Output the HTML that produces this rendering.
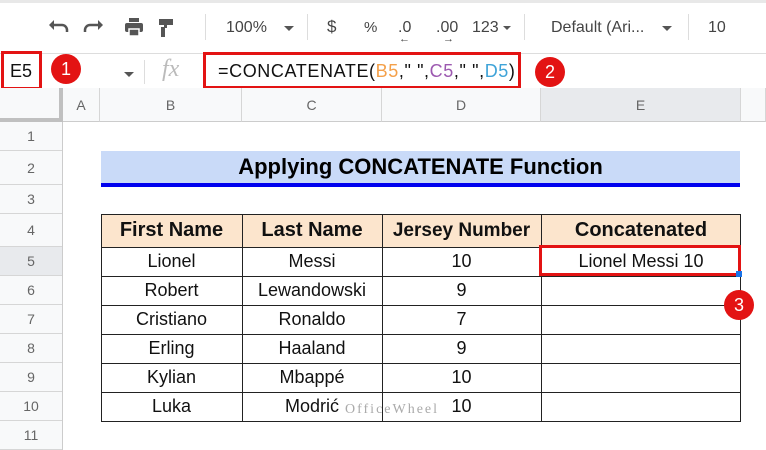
<!DOCTYPE html>
<html><head><style>
*{margin:0;padding:0;box-sizing:border-box}
body{width:766px;height:450px;overflow:hidden;background:#fff;font-family:"Liberation Sans",Arial,sans-serif;position:relative}
.a{position:absolute}
.tb{color:#444;font-size:16px}
.cell{position:absolute;display:flex;align-items:center;justify-content:center;font-size:18px;color:#111;white-space:nowrap}
.rh{position:absolute;left:0;width:62px;border-bottom:1px solid #d6d6d6;background:#f8f9fa;color:#666;font-size:14px;display:flex;align-items:center;justify-content:center}
.ch{position:absolute;top:88px;height:34px;border-right:1px solid #d6d6d6;background:#f8f9fa;color:#666;font-size:14px;display:flex;align-items:center;justify-content:center;border-bottom:1px solid #ccc}
.circ{position:absolute;width:30px;height:30px;border-radius:50%;background:#e31313;color:#fff;font-size:18px;display:flex;align-items:center;justify-content:center}
.hd{font-weight:bold;font-size:20px}
</style></head><body>
<div class="a" style="left:0;top:0;width:766px;height:3px;background:#e8e8e8"></div>
<svg class="a" style="left:46px;top:16px" width="130" height="24" viewBox="0 0 130 24">
<path d="M6 9 h10 a5 5 0 0 1 5 5 v2" fill="none" stroke="#555" stroke-width="2.5"/><path d="M3 9 l5-5 v10z" fill="#555"/>
<path d="M54 9 h-10 a5 5 0 0 0 -5 5 v2" fill="none" stroke="#555" stroke-width="2.5"/><path d="M57 9 l-5-5 v10z" fill="#555"/>
<rect x="83" y="2" width="10" height="4" fill="#555"/><rect x="79" y="7" width="18" height="9" rx="2" fill="#555"/><rect x="83" y="13" width="10" height="7" fill="#555" stroke="#fff" stroke-width="1.5"/>
<rect x="113" y="3" width="14" height="6" fill="#555"/><rect x="118" y="9" width="3" height="3" fill="#555"/><rect x="115" y="11" width="4" height="10" fill="#555"/>
</svg>
<div class="a" style="left:205px;top:14px;width:1px;height:26px;background:#ddd"></div>
<div class="a tb" style="left:226px;top:19px">100%</div><div class="a" style="left:284px;top:26px;border:5px solid transparent;border-top-color:#555"></div>
<div class="a" style="left:307px;top:14px;width:1px;height:26px;background:#ddd"></div>
<div class="a tb" style="left:327px;top:17px;font-size:17px">$</div>
<div class="a tb" style="left:364px;top:19px;font-size:15px">%</div>
<div class="a tb" style="left:398px;top:19px">.0</div><div class="a" style="left:399px;top:33px;font-size:11px;color:#444">←</div>
<div class="a tb" style="left:436px;top:19px">.00</div><div class="a" style="left:443px;top:33px;font-size:11px;color:#444">→</div>
<div class="a tb" style="left:472px;top:19px">123</div><div class="a" style="left:503px;top:26px;border:4px solid transparent;border-top-color:#555"></div>
<div class="a" style="left:524px;top:14px;width:1px;height:26px;background:#ddd"></div>
<div class="a tb" style="left:551px;top:19px">Default (Ari...</div><div class="a" style="left:662px;top:26px;border:5px solid transparent;border-top-color:#555"></div>
<div class="a" style="left:688px;top:14px;width:1px;height:26px;background:#ddd"></div>
<div class="a tb" style="left:708px;top:19px">10</div>
<div class="a" style="left:0;top:53px;width:766px;height:1px;background:#ddd"></div>
<div class="a" style="left:1px;top:51px;width:41px;height:39px;border:3px solid #e31313"></div>
<div class="a" style="left:10px;top:61px;font-size:18px;color:#111">E5</div>
<div class="circ" style="left:51px;top:54px">1</div>
<div class="a" style="left:124px;top:72px;border:5px solid transparent;border-top-color:#555"></div>
<div class="a" style="left:144px;top:60px;width:1px;height:24px;background:#ddd"></div>
<div class="a" style="left:162px;top:56px;font-family:'Liberation Serif',serif;font-style:italic;font-size:24px;color:#bbb">fx</div>
<div class="a" style="left:203px;top:52px;width:318px;height:37px;border:3px solid #e31313"></div>
<div class="a" style="left:218px;top:61px;font-size:18px;color:#111;letter-spacing:0.6px;white-space:nowrap">=CONCATENATE(<span style="color:#f4a04a">B5</span>," ",<span style="color:#9c59b0">C5</span>," ",<span style="color:#3ea3d8">D5</span>)</div>
<div class="circ" style="left:535px;top:57px">2</div>
<div class="a" style="left:0;top:88px;width:766px;height:1px;background:#ccc"></div>
<div class="a" style="left:0;top:88px;width:63px;height:34px;background:#f8f9fa;border-right:4px solid #c0c0c0;border-bottom:4px solid #c0c0c0"></div>
<div class="ch" style="left:63px;width:37px">A</div>
<div class="ch" style="left:100px;width:142px">B</div>
<div class="ch" style="left:242px;width:140px">C</div>
<div class="ch" style="left:382px;width:159px">D</div>
<div class="ch" style="left:541px;width:200px;background:#e8eaed">E</div>
<div class="ch" style="left:741px;width:25px"></div>
<div class="a" style="left:62px;top:122px;width:1px;height:328px;background:#ccc"></div>
<div class="rh" style="top:122px;height:29px">1</div>
<div class="rh" style="top:151px;height:34px">2</div>
<div class="rh" style="top:185px;height:29px">3</div>
<div class="rh" style="top:214px;height:33px">4</div>
<div class="rh" style="top:247px;height:29px;background:#e8eaed">5</div>
<div class="rh" style="top:276px;height:29px">6</div>
<div class="rh" style="top:305px;height:29px">7</div>
<div class="rh" style="top:334px;height:29px">8</div>
<div class="rh" style="top:363px;height:29px">9</div>
<div class="rh" style="top:392px;height:29px">10</div>
<div class="rh" style="top:421px;height:29px">11</div>
<div class="cell" style="left:101px;top:151px;width:639px;height:32px;background:#c9daf8;font-weight:bold;font-size:22px;color:#000">Applying CONCATENATE Function</div>
<div class="a" style="left:101px;top:183px;width:639px;height:4px;background:#0000ee"></div>
<div class="a" style="left:101px;top:214px;width:640px;height:208px;border:1px solid #222"></div>
<div class="a" style="left:102px;top:215px;width:638px;height:32px;background:#fce5cd"></div>
<div class="a" style="left:242px;top:214px;width:1px;height:208px;background:#222"></div>
<div class="a" style="left:382px;top:214px;width:1px;height:208px;background:#222"></div>
<div class="a" style="left:541px;top:214px;width:1px;height:208px;background:#222"></div>
<div class="a" style="left:101px;top:247px;width:640px;height:1px;background:#222"></div>
<div class="a" style="left:101px;top:276px;width:640px;height:1px;background:#222"></div>
<div class="a" style="left:101px;top:305px;width:640px;height:1px;background:#222"></div>
<div class="a" style="left:101px;top:334px;width:640px;height:1px;background:#222"></div>
<div class="a" style="left:101px;top:363px;width:640px;height:1px;background:#222"></div>
<div class="a" style="left:101px;top:392px;width:640px;height:1px;background:#222"></div>
<div class="cell hd" style="left:101px;top:214px;width:141px;height:33px">First Name</div>
<div class="cell hd" style="left:242px;top:214px;width:140px;height:33px">Last Name</div>
<div class="cell hd" style="left:382px;top:214px;width:159px;height:33px;font-size:19px">Jersey Number</div>
<div class="cell hd" style="left:541px;top:214px;width:200px;height:33px">Concatenated</div>
<div class="cell" style="left:101px;top:247px;width:141px;height:29px">Lionel</div><div class="cell" style="left:242px;top:247px;width:140px;height:29px">Messi</div><div class="cell" style="left:382px;top:247px;width:159px;height:29px">10</div>
<div class="cell" style="left:101px;top:276px;width:141px;height:29px">Robert</div><div class="cell" style="left:242px;top:276px;width:140px;height:29px">Lewandowski</div><div class="cell" style="left:382px;top:276px;width:159px;height:29px">9</div>
<div class="cell" style="left:101px;top:305px;width:141px;height:29px">Cristiano</div><div class="cell" style="left:242px;top:305px;width:140px;height:29px">Ronaldo</div><div class="cell" style="left:382px;top:305px;width:159px;height:29px">7</div>
<div class="cell" style="left:101px;top:334px;width:141px;height:29px">Erling</div><div class="cell" style="left:242px;top:334px;width:140px;height:29px">Haaland</div><div class="cell" style="left:382px;top:334px;width:159px;height:29px">9</div>
<div class="cell" style="left:101px;top:363px;width:141px;height:29px">Kylian</div><div class="cell" style="left:242px;top:363px;width:140px;height:29px">Mbappé</div><div class="cell" style="left:382px;top:363px;width:159px;height:29px">10</div>
<div class="cell" style="left:101px;top:392px;width:141px;height:29px">Luka</div><div class="cell" style="left:242px;top:392px;width:140px;height:29px">Modrić</div><div class="cell" style="left:382px;top:392px;width:159px;height:29px">10</div>
<div class="a" style="left:345px;top:402px;font-family:'Liberation Serif',serif;font-size:14px;color:#aaa;letter-spacing:2px">OfficeWheel</div>
<div class="cell" style="left:541px;top:247px;width:200px;height:29px">Lionel Messi 10</div>
<div class="a" style="left:539px;top:245px;width:202px;height:31px;border:3px solid #e31313"></div>
<div class="a" style="left:736px;top:271px;width:6px;height:6px;background:#1a73e8"></div>
<div class="circ" style="left:724px;top:290px">3</div>
</body></html>
